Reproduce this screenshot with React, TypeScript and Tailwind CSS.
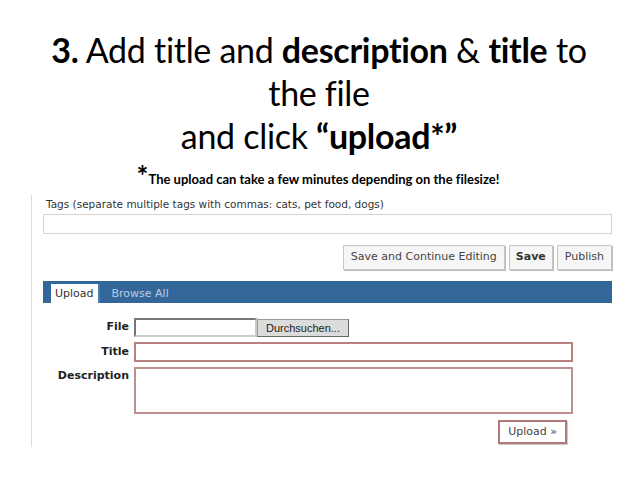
import React from "react";

const uiFont = { fontFamily: '"DejaVu Sans", Verdana, sans-serif' };

const UploadForm: React.FC = () => {
  return (
    <div className="ml-[31px] mt-[4px] h-[252px] border-l border-[#dcdcdc] pl-[11px] pt-[3px] w-[581px]" style={uiFont}>
      <div className="text-[10.5px] leading-[13px] text-[#333] pl-[3px]">
        Tags (separate multiple tags with commas: cats, pet food, dogs)
      </div>
      <div className="mt-[3px] h-[20px] w-[569px] border border-[#d4d4d4] bg-white" />

      <div className="mt-[11px] flex justify-end gap-[4px] w-[569px]">
        <button className="h-[25px] px-[7px] border border-[#c8c8c8] bg-[#f6f6f6] text-[11px] text-[#444] shadow-[1px_1px_0_#bbb]">
          Save and Continue Editing
        </button>
        <button className="h-[25px] px-[6px] border border-[#c8c8c8] bg-[#f6f6f6] text-[11px] font-bold text-[#333] shadow-[1px_1px_0_#bbb]">
          Save
        </button>
        <button className="h-[25px] px-[7px] border border-[#c8c8c8] bg-[#f6f6f6] text-[11px] text-[#444] shadow-[1px_1px_0_#bbb]">
          Publish
        </button>
      </div>

      <div className="mt-[11px] h-[22px] w-[569px] bg-[#33679a] flex items-end pl-[8px] gap-[12px]">
        <div className="h-[19px] px-[4px] bg-white text-[11px] leading-[19px] text-[#333] border-r-2 border-[#4a7fb0]">
          Upload
        </div>
        <div className="h-[19px] text-[11px] leading-[19px] text-[#b9cde3]">Browse All</div>
      </div>

      <div className="mt-[15px] grid grid-cols-[86px_440px] gap-x-[5px] gap-y-[5px] items-start">
        <div className="text-right text-[11px] font-bold text-[#222] leading-[18px]">File</div>
        <div className="flex items-start">
          <div className="h-[19px] w-[123px] border-2 border-t-[#777] border-l-[#777] border-b-[#ccc] border-r-[#ccc] bg-white" />
          <button
            className="h-[18px] mt-[1px] w-[92px] bg-[#dcdcdc] border border-[#999] border-r-[#666] border-b-[#666] text-[11px] leading-[16px] text-[#222]"
            style={{ fontFamily: '"Liberation Sans", Arial, sans-serif' }}
          >
            Durchsuchen...
          </button>
        </div>

        <div className="text-right text-[11px] font-bold text-[#222] leading-[18px] mt-[1px]">Title</div>
        <div className="h-[20px] w-[439px] border-2 border-[#b98080] bg-white" />

        <div className="text-right text-[11px] font-bold text-[#222] leading-[18px]">Description</div>
        <div className="h-[47px] w-[439px] border-2 border-[#c09090] bg-white" />

        <div />
        <div className="flex justify-end pr-[7px] mt-[1px]">
          <button className="h-[24px] px-[8px] border-2 border-[#b07878] bg-white text-[11px] text-[#444] shadow-[1px_1px_0_#ccc]">
            Upload »
          </button>
        </div>
      </div>
    </div>
  );
};

const App: React.FC = () => {
  return (
    <div className="w-[638px] h-[478px] bg-white overflow-hidden">
      <div
        className="pt-[28px] text-center text-[34px] leading-[43px] tracking-[-0.3px] text-black"
        style={{ fontFamily: 'Lato, "Open Sans", sans-serif', fontVariantLigatures: "none" }}
      >
        <div>
          <span className="font-bold">3.</span> Add title and <span className="font-bold">description</span> &amp;{" "}
          <span className="font-bold">title</span> to
        </div>
        <div>the file</div>
        <div>
          and click <span className="font-bold">“upload*”</span>
        </div>
        <div className="mt-[10px] text-[13px] leading-[24px] tracking-normal font-bold pr-[2px]">
          <span className="text-[28px] leading-[0] align-[-2px]">*</span>The upload can take a few minutes depending on the filesize!
        </div>
      </div>
      <UploadForm />
    </div>
  );
};

export default App;
